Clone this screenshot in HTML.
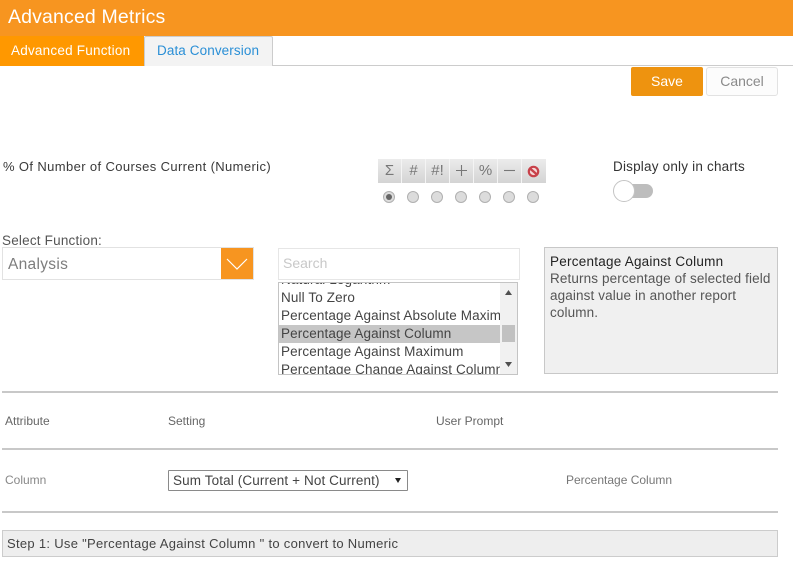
<!DOCTYPE html>
<html><head><meta charset="utf-8">
<style>
html,body{margin:0;padding:0;background:#fff;width:793px;height:561px;overflow:hidden}
body{font-family:"Liberation Sans",sans-serif;position:relative}
.a{position:absolute;white-space:nowrap}
.hr{position:absolute;left:2px;width:776px;height:2px;background:#c8c8c8}
.ic{position:absolute;top:159px;width:23px;height:24px;background:linear-gradient(#ececec,#d4d4d4);text-align:center;color:#777;font-size:15px;line-height:24px}
.r{position:absolute;top:191px;width:10px;height:10px;border:1px solid #b0b0b0;border-radius:50%;background:#dcdcdc}
.l{font-size:13.5px;line-height:18px;color:#444;letter-spacing:.12px}
.s{font-size:12px;line-height:16px}
</style></head><body>
<div class="a" style="left:0;top:0;width:793px;height:36px;background:#f79520"></div>
<div class="a" style="left:8px;top:5px;font-size:19.5px;line-height:24px;color:#fff;letter-spacing:.15px">Advanced Metrics</div>
<div class="a" style="left:0;top:65px;width:793px;height:1px;background:#ccc"></div>
<div class="a" style="left:0;top:36px;width:144px;height:30px;background:#ff9800"></div>
<div class="a" style="left:11px;top:42px;font-size:13.5px;line-height:17px;color:#fff;letter-spacing:.22px">Advanced Function</div>
<div class="a" style="left:144px;top:36px;width:127px;height:29px;background:#f3f3f3;border:1px solid #ccc;border-bottom:none;border-radius:2px 2px 0 0"></div>
<div class="a" style="left:157px;top:42px;font-size:13.5px;line-height:17px;color:#2a8fd6;letter-spacing:.1px">Data Conversion</div>

<div class="a" style="left:631px;top:67px;width:72px;height:29px;background:#ee930f;border-radius:2px;color:#fff;font-size:14px;line-height:29px;text-align:center">Save</div>
<div class="a" style="left:706px;top:67px;width:70px;height:27px;background:#fcfcfc;border:1px solid #e2e2e2;border-radius:3px;color:#8a8a8a;font-size:14px;line-height:27px;text-align:center">Cancel</div>

<div class="a" style="left:3px;top:158px;font-size:13px;line-height:17px;color:#3a3a3a;letter-spacing:.38px">% Of Number of Courses Current (Numeric)</div>

<div class="a" style="left:378px;top:159px;width:168px;height:24px;background:#f4f4f4"></div>
<div class="ic" style="left:378px">Σ</div>
<div class="ic" style="left:402px">#</div>
<div class="ic" style="left:426px">#!</div>
<div class="ic" style="left:450px"></div>
<svg class="a" style="left:455px;top:164px" width="13" height="13"><path d="M6.5 1V12M1 6.5H12" stroke="#777" stroke-width="1.1"/></svg>
<div class="ic" style="left:474px">%</div>
<div class="ic" style="left:498px"></div>
<svg class="a" style="left:503px;top:164px" width="13" height="13"><path d="M1 6.5H12" stroke="#777" stroke-width="1.1"/></svg>
<div class="ic" style="left:522px;width:24px"></div>
<svg class="a" style="left:527px;top:165px" width="13" height="13" viewBox="0 0 13 13"><circle cx="6.5" cy="6.5" r="4.7" fill="#f4d8d8" stroke="#c8414a" stroke-width="2.2"/><path d="M3.2 3.6L9.8 9.4" stroke="#c8414a" stroke-width="2.4"/></svg>
<div class="r" style="left:383px"></div><div class="a" style="left:386px;top:194px;width:6px;height:6px;border-radius:50%;background:#666"></div>
<div class="r" style="left:407px"></div><div class="r" style="left:431px"></div><div class="r" style="left:455px"></div><div class="r" style="left:479px"></div><div class="r" style="left:503px"></div><div class="r" style="left:527px"></div>

<div class="a" style="left:613px;top:158px;font-size:13.5px;line-height:17px;color:#333;letter-spacing:.2px">Display only in charts</div>
<div class="a" style="left:622px;top:184px;width:31px;height:14px;background:#bdbdbd;border-radius:7px"></div>
<div class="a" style="left:613px;top:180px;width:20px;height:20px;background:#fff;border:1px solid #c4c4c4;border-radius:50%"></div>

<div class="a" style="left:2px;top:232px;font-size:13.5px;line-height:17px;color:#555;letter-spacing:.2px">Select Function:</div>
<div class="a" style="left:2px;top:247px;width:250px;height:31px;border:1px solid #e2e2e2;background:#fff"></div>
<div class="a" style="left:8px;top:255px;font-size:15.5px;line-height:19px;color:#7d7d7d;letter-spacing:.3px">Analysis</div>
<div class="a" style="left:221px;top:248px;width:32px;height:31px;background:#f79520"></div>
<svg class="a" style="left:226px;top:258px" width="22" height="12" viewBox="0 0 22 12"><path d="M1 1L11 11L21 1" fill="none" stroke="#fff" stroke-width="1.2"/></svg>

<div class="a" style="left:278px;top:248px;width:240px;height:30px;border:1px solid #e6e6e6;background:#fff"></div>
<div class="a" style="left:283px;top:255px;font-size:14px;line-height:17px;color:#c8c8c8">Search</div>

<div class="a" style="left:278px;top:282px;width:238px;height:91px;border:1px solid #c4c4c4;overflow:hidden;background:#fff">
  <div class="a l" style="left:2px;top:-12px">Natural Logarithm</div>
  <div class="a l" style="left:2px;top:6px">Null To Zero</div>
  <div class="a l" style="left:2px;top:24px;width:219px;overflow:hidden">Percentage Against Absolute Maximum</div>
  <div class="a" style="left:0;top:42px;width:221px;height:18px;background:#c6c6c6"></div>
  <div class="a l" style="left:2px;top:42px">Percentage Against Column</div>
  <div class="a l" style="left:2px;top:60px">Percentage Against Maximum</div>
  <div class="a l" style="left:2px;top:78px;width:219px;overflow:hidden">Percentage Change Against Column</div>
  <div class="a" style="left:221px;top:0;width:17px;height:91px;background:#f1f1f1"></div>
  <div class="a" style="left:223px;top:42px;width:13px;height:17px;background:#c1c1c1"></div>
  <svg class="a" style="left:226px;top:7px" width="7" height="5"><path d="M0 5L3.5 0L7 5Z" fill="#505050"/></svg>
  <svg class="a" style="left:226px;top:79px" width="7" height="5"><path d="M0 0L3.5 5L7 0Z" fill="#505050"/></svg>
</div>

<div class="a" style="left:544px;top:247px;width:232px;height:125px;background:#f0f0f0;border:1px solid #c8c8c8"></div>
<div class="a" style="left:550px;top:253px;font-size:13.5px;line-height:17px;color:#222;letter-spacing:.24px">Percentage Against Column<br><span style="color:#555;letter-spacing:.12px">Returns percentage of selected field<br>against value in another report<br>column.</span></div>

<div class="hr" style="top:391px"></div>
<div class="a s" style="left:5px;top:413px;color:#666">Attribute</div>
<div class="a s" style="left:168px;top:413px;color:#666">Setting</div>
<div class="a s" style="left:436px;top:413px;color:#666">User Prompt</div>
<div class="hr" style="top:448px"></div>
<div class="a s" style="left:5px;top:472px;color:#888">Column</div>
<div class="a" style="left:168px;top:470px;width:238px;height:19px;border:1px solid #8a8a8a;border-radius:1px;background:#fff"></div>
<div class="a" style="left:173px;top:472px;font-size:13.5px;line-height:17px;color:#444;letter-spacing:.12px">Sum Total (Current + Not Current)</div>
<svg class="a" style="left:395px;top:478px" width="6" height="5"><path d="M0 0L6 0L3 5Z" fill="#222"/></svg>
<div class="a s" style="left:566px;top:472px;color:#777">Percentage Column</div>
<div class="hr" style="top:511px"></div>
<div class="a" style="left:2px;top:530px;width:774px;height:25px;background:#eee;border:1px solid #ccc"></div>
<div class="a" style="left:7px;top:535px;font-size:13px;line-height:17px;color:#444;letter-spacing:.3px">Step 1: Use "Percentage Against Column " to convert to Numeric</div>
</body></html>
